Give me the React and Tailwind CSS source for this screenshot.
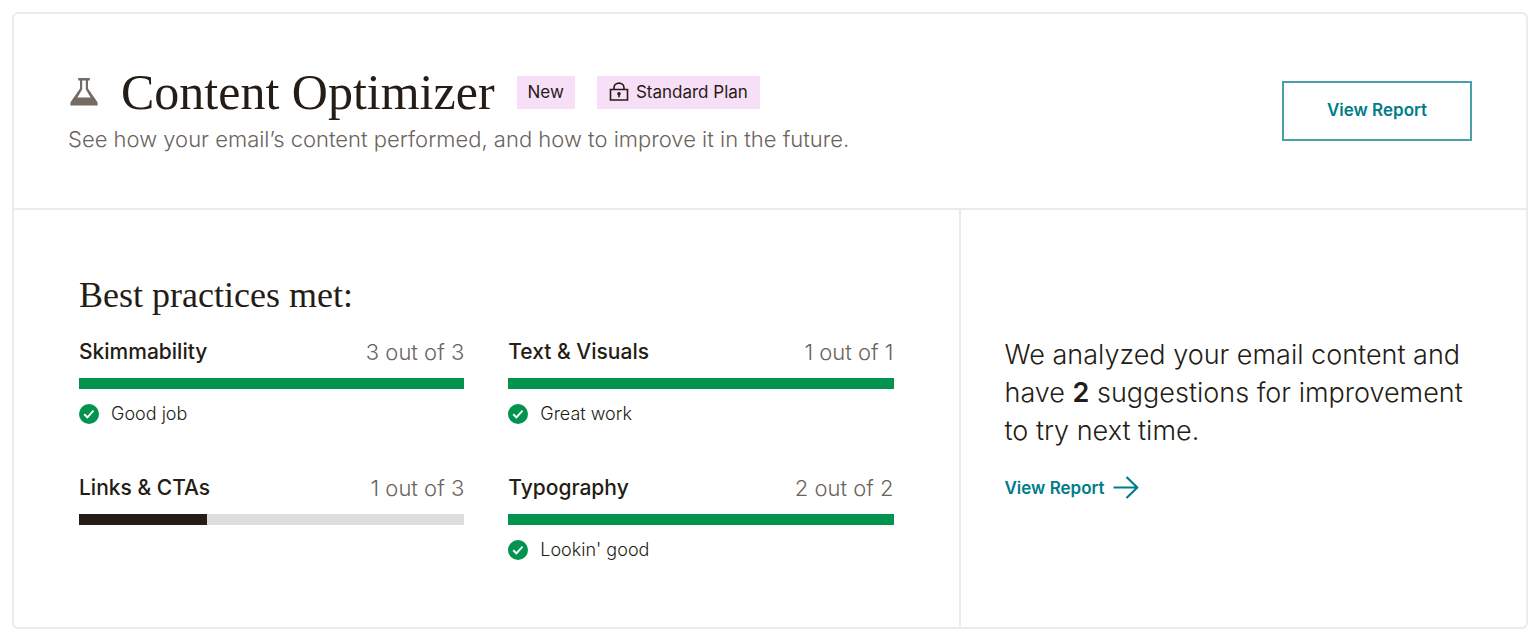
import React from "react";

const practices = [
  { name: "Skimmability", met: 3, total: 3, note: "Good job" },
  { name: "Text & Visuals", met: 1, total: 1, note: "Great work" },
  { name: "Links & CTAs", met: 1, total: 3 },
  { name: "Typography", met: 2, total: 2, note: "Lookin' good" },
];

function FlaskIcon() {
  return (
    <svg className="h-7 w-[31px] shrink-0" viewBox="-2 0 31 28" fill="#736b64" aria-hidden="true">
      <path
        fillRule="evenodd"
        d="M8.200 0h11.600v2.400h-1.800v8L27 23.600q1 1.600.6 3.900H.4Q0 25.200 1 23.600L10 10.400v-8H8.200zM12.200 2.400v8.800L7.400 19.400h13.200l-4.800-8.200V2.400z"
      />
    </svg>
  );
}

function LockIcon() {
  return (
    <svg className="h-5 w-5 shrink-0" viewBox="0 0 20 20" fill="none" stroke="#241c15" strokeWidth="1.600" aria-hidden="true">
      <path d="M1.500 7.500h17v10.500h-17zM5 7.500V5.700a5 4.600 0 0 1 10 0V7.500" />
      <circle cx="10" cy="11.800" r="1.800" fill="#241c15" stroke="none" />
      <path d="M10 12v3.300" />
    </svg>
  );
}

function CheckIcon() {
  return (
    <svg className="h-5 w-5 shrink-0" viewBox="0 0 20 20" fill="none" aria-hidden="true">
      <circle cx="10" cy="10" r="10" fill="#02934f" />
      <path d="M5.200 10.300 8.400 13.300 14.500 6.700" stroke="#fff" strokeWidth="1.900" />
    </svg>
  );
}

function ArrowIcon() {
  return (
    <svg className="h-6 w-[26px] shrink-0" viewBox="0 0 26 24" fill="none" stroke="#007c89" strokeWidth="2.200" strokeLinejoin="round" aria-hidden="true">
      <path d="M0.500 11.500h24M13.500 1 24.300 11.500 13.500 22" />
    </svg>
  );
}

function Practice({ name, met, total, note }) {
  const complete = met === total;
  return (
    <li className="h-[136px]">
      <div className="flex items-center justify-between leading-8">
        <h3 className="text-[21px] font-medium">{name}</h3>
        <span className="text-[22px] font-light text-[#6b645d]">
          {met} out of {total}
        </span>
      </div>
      <div
        className="mt-[10px] h-[11px] bg-[#dedddc]"
        role="progressbar"
        aria-label={name}
        aria-valuenow={met}
        aria-valuemin={0}
        aria-valuemax={total}
      >
        <div
          className={complete ? "h-full bg-[#02934f]" : "h-full bg-[#241c15]"}
          style={{ width: `${(met / total) * 100}%` }}
        />
      </div>
      {note && (
        <p className="mt-[13px] flex items-center gap-3 text-[18px] leading-6 font-light text-[#241c15]">
          <CheckIcon />
          {note}
        </p>
      )}
    </li>
  );
}

export default function App() {
  return (
    <main className="bg-white px-2 py-3 font-['Inter','Liberation_Sans',sans-serif] text-[#241c15] md:pr-2 md:pl-3">
      <section className="rounded-md border-2 border-[#ebebeb]">
        <header className="flex flex-wrap items-start justify-between gap-6 border-b-2 border-[#ebebeb] px-[54px] pt-[54px] pb-[53px]">
          <div>
            <div className="flex flex-wrap items-center gap-[22px]">
              <FlaskIcon />
              <h1 className="font-['Liberation_Serif',serif] text-[50px] leading-[48px]">Content Optimizer</h1>
              <span className="bg-[#f8dff8] px-[11px] py-1 text-[17px] leading-[25px]">New</span>
              <span className="flex items-center gap-[7px] bg-[#f8dff8] px-3 py-1 text-[17px] leading-[25px]">
                <LockIcon />
                Standard Plan
              </span>
            </div>
            <p className="mt-[7px] text-[22px] leading-8 font-light text-[#6b645d]">
              See how your email’s content performed, and how to improve it in the future.
            </p>
          </div>
          <button
            type="button"
            className="mt-[13px] h-[60px] w-[190px] border-2 border-[#4b9fa8] text-[17px] font-semibold text-[#007c89]"
          >
            View Report
          </button>
        </header>

        <div className="grid lg:grid-cols-[626fr_374fr]">
          <div className="border-[#ebebeb] px-[65px] pt-[61px] lg:border-r-2">
            <h2 className="font-['Liberation_Serif',serif] text-[36px] leading-[48px]">Best practices met:</h2>
            <ul className="mt-[17px] mb-[19px] grid gap-x-11 md:grid-cols-2">
              {practices.map((p) => (
                <Practice key={p.name} {...p} />
              ))}
            </ul>
          </div>
          <aside className="flex flex-col items-start px-11 pt-[126px] pb-12">
            <p className="text-[27px] leading-[38px] font-light">
              We analyzed your email content and have <strong className="font-semibold">2</strong> suggestions for improvement to try next time.
            </p>
            <a href="#report" className="mt-[26px] flex items-center gap-2 text-[17px] leading-6 font-semibold text-[#007c89]">
              View Report
              <ArrowIcon />
            </a>
          </aside>
        </div>
      </section>
    </main>
  );
}
